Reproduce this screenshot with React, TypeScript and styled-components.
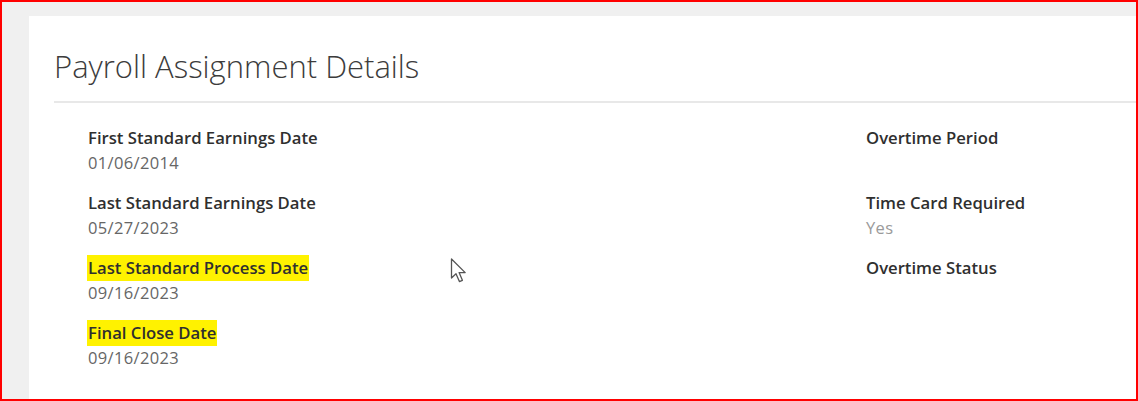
import React from "react";
import styled, { createGlobalStyle } from "styled-components";

const Global = createGlobalStyle`
  html, body { margin: 0; padding: 0; background: #ffffff; }
  * { box-sizing: border-box; }
`;

const Frame = styled.div`
  position: relative;
  width: 1138px;
  height: 401px;
  border: 2px solid #ff0000;
  background: #f0f0f0;
  padding: 14px 0 0 27px;
  display: flex;
  overflow: hidden;
`;

const Card = styled.section`
  flex: 1;
  background: #ffffff;
  padding: 0 0 0 25px;
  display: flex;
  flex-direction: column;
`;

const Header = styled.div`
  padding-top: 30px;
  height: 87px;
  border-bottom: 2px solid #e8e8e8;
`;

const Title = styled.h1`
  margin: 0;
  font-family: "Open Sans", "Noto Sans", sans-serif;
  font-weight: 300;
  font-size: 31px;
  line-height: 40px;
  color: #3c3c3c;
  letter-spacing: 0;
`;

const Grid = styled.div`
  display: grid;
  grid-template-columns: 778px 1fr;
  padding: 23px 0 0 34px;
`;

const Column = styled.div`
  display: flex;
  flex-direction: column;
  gap: 16px;
`;

const Field = styled.div`
  display: flex;
  flex-direction: column;
`;

const Label = styled.div`
  font-family: "Open Sans", "Noto Sans", sans-serif;
  font-weight: 600;
  font-size: 16.7px;
  line-height: 24px;
  height: 24px;
  color: #2f2f2f;
  letter-spacing: 0;
  white-space: nowrap;
`;

const Mark = styled.span<{ $on?: boolean }>`
  background: ${(p) => (p.$on ? "#fff200" : "transparent")};
  padding: 1px 1px 2px 1px;
  margin-left: -1px;
`;

const Value = styled.div<{ $muted?: boolean }>`
  font-family: "Open Sans", "Noto Sans", sans-serif;
  font-weight: 400;
  font-size: 16.5px;
  line-height: 25px;
  height: 25px;
  color: ${(p) => (p.$muted ? "#9a9a9a" : "#666666")};
  letter-spacing: 0.35px;
`;

const Cursor = styled.svg`
  position: absolute;
  left: 447px;
  top: 255px;
  width: 22px;
  height: 30px;
`;

type Item = { label: string; value?: string; mark?: boolean; muted?: boolean };

const left: Item[] = [
  { label: "First Standard Earnings Date", value: "01/06/2014" },
  { label: "Last Standard Earnings Date", value: "05/27/2023" },
  { label: "Last Standard Process Date", value: "09/16/2023", mark: true },
  { label: "Final Close Date", value: "09/16/2023", mark: true },
];

const right: Item[] = [
  { label: "Overtime Period" },
  { label: "Time Card Required", value: "Yes", muted: true },
  { label: "Overtime Status" },
];

const renderCol = (items: Item[]) =>
  items.map((it) => (
    <Field key={it.label}>
      <Label>
        <Mark $on={it.mark}>{it.label}</Mark>
      </Label>
      <Value $muted={it.muted}>{it.value ?? ""}</Value>
    </Field>
  ));

export default function App() {
  return (
    <>
      <Global />
      <Frame>
        <Card>
          <Header>
            <Title>Payroll Assignment Details</Title>
          </Header>
          <Grid>
            <Column>{renderCol(left)}</Column>
            <Column>{renderCol(right)}</Column>
          </Grid>
        </Card>
        <Cursor viewBox="0 0 22 30">
          <path
            d="M2.5 2 L2.5 21 L7 16.8 L10.4 24.6 L13.4 23.3 L10.1 15.6 L16.2 15.6 Z"
            fill="#ffffff"
            stroke="#555555"
            strokeWidth="1.3"
            strokeLinejoin="round"
          />
        </Cursor>
      </Frame>
    </>
  );
}
